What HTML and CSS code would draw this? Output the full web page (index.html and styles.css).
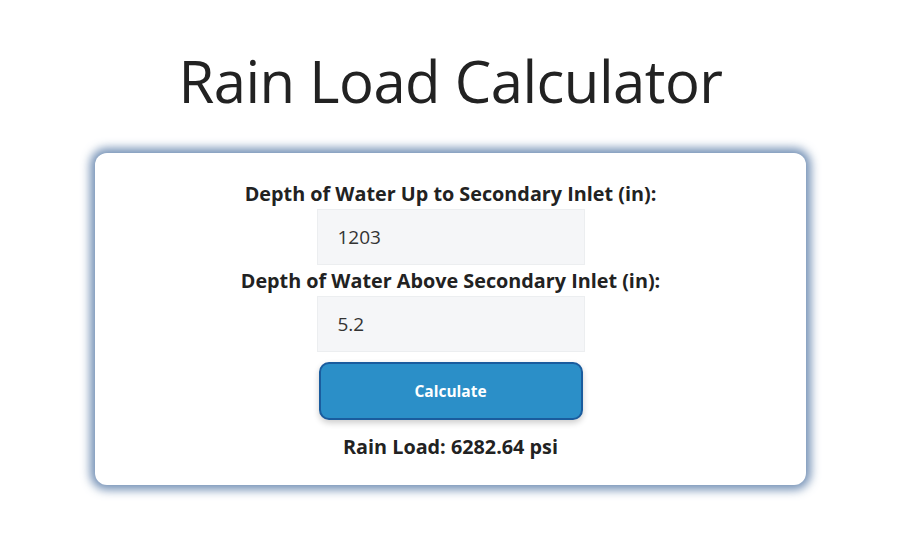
FILE: index.html
```html
<!DOCTYPE html>
<html>
<head>
<meta charset="utf-8">
<link rel="stylesheet" href="styles.css">
</head>
<body>
<h1 class="title">Rain Load Calculator</h1>
<div class="card">
  <label class="label">Depth of Water Up to Secondary Inlet (in):</label>
  <input class="field" type="text" value="1203">
  <label class="label">Depth of Water Above Secondary Inlet (in):</label>
  <input class="field" type="text" value="5.2">
  <button class="btn">Calculate</button>
  <div class="result">Rain Load: 6282.64 psi</div>
</div>
</body>
</html>
```
FILE: styles.css
```css
html, body {
  min-height: 100%;
}
body {
  margin: 0;
  min-height: 536px;
  background: #fff;
  font-family: "Open Sans", "Noto Sans", sans-serif;
  color: #222;
  display: flex;
  flex-direction: column;
  align-items: center;
}
.title {
  font-weight: 400;
  font-size: 58px;
  margin: 46px 0 37px;
  line-height: 1.2;
  letter-spacing: -0.5px;
}
.card {
  width: 711px;
  box-sizing: border-box;
  border-radius: 12px;
  background: #fff;
  box-shadow: 0 0 10px 5px rgba(85, 120, 165, 0.8);
  display: flex;
  flex-direction: column;
  align-items: center;
  padding: 29px 0 26px;
}
.label {
  font-weight: 700;
  font-size: 19.8px;
  line-height: 24px;
  display: block;
  margin-bottom: 3px;
}
.field {
  width: 268px;
  height: 56px;
  box-sizing: border-box;
  background: #f5f6f8;
  border: 1px solid #eceef0;
  font-family: inherit;
  font-size: 19px;
  color: #333;
  padding: 0 20px;
  margin-bottom: 4px;
  outline: none;
}
.btn {
  width: 264px;
  height: 58px;
  margin-top: 6px;
  background: #2b8fc8;
  border: 2px solid #1a5c9e;
  border-radius: 10px;
  color: #fff;
  font-family: inherit;
  font-weight: 700;
  font-size: 15.5px;
  box-shadow: 0 3px 6px rgba(0, 0, 0, 0.2);
}
.result {
  margin-top: 15px;
  font-weight: 700;
  font-size: 19.8px;
  line-height: 24px;
}
```
